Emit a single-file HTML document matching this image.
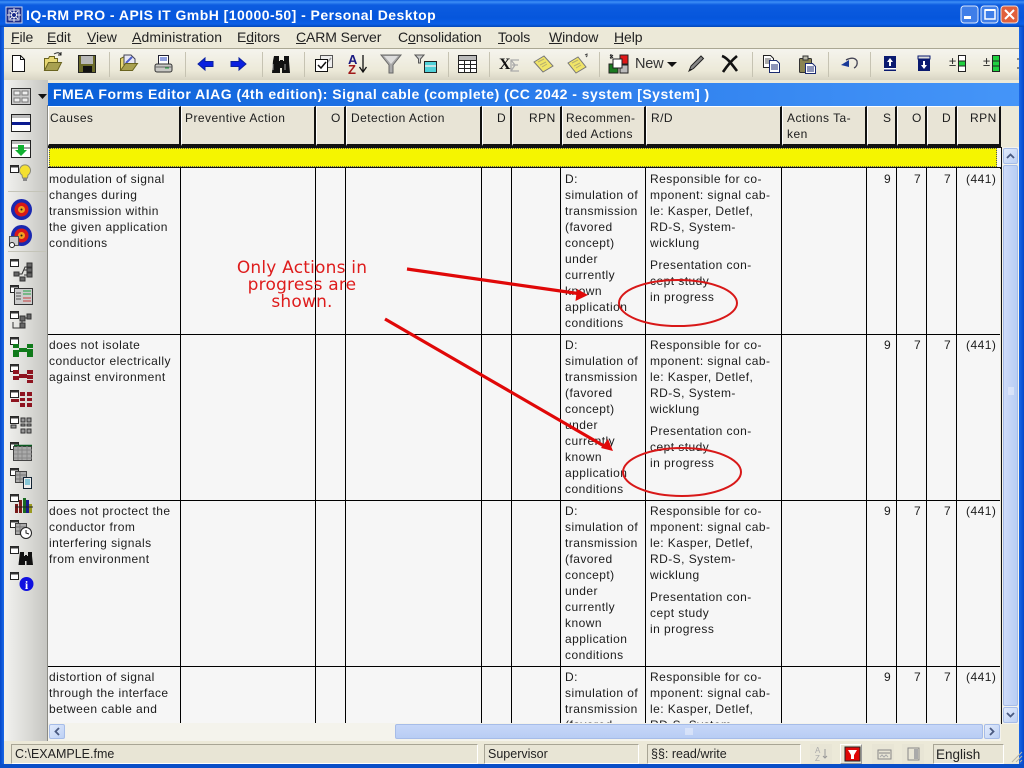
<!DOCTYPE html>
<html><head><meta charset="utf-8"><style>
html,body{margin:0;padding:0;width:1024px;height:768px;overflow:hidden;background:#ece9d8}
body{position:relative;font-family:"Liberation Sans",sans-serif;font-size:12px;color:#111}
.a{position:absolute;box-sizing:border-box}
.t{position:absolute;white-space:pre;line-height:16px;letter-spacing:.45px;color:#1c1c1c}
.m{position:absolute;top:28px;font-size:14px;line-height:18px;letter-spacing:-.1px;color:#222;white-space:pre}
.m u{text-decoration:underline}
.v{position:absolute;width:1px;background:#000}
.h{position:absolute;height:40px;top:106px;background:#e8e4d6;border-right:2px solid #111;border-bottom:2px solid #111;border-top:1px solid #fff;border-left:1px solid #fff;box-sizing:border-box}
.s{position:absolute;top:744px;height:20px;background:#e8e5d5;border:1px solid #a8a595;border-right-color:#fff;border-bottom-color:#fff;box-sizing:border-box;line-height:19px;font-size:12.5px;padding-left:3px;white-space:pre;color:#222}
.sb{position:absolute;top:744px;height:20px;width:22px;background:#e8e5d5;box-sizing:border-box}
#clip{position:absolute;left:48px;top:168px;width:952px;height:555px;overflow:hidden;background:#f6f6f6}
</style></head><body>
<div class="a" style="left:0;top:0;width:1024px;height:27px;background:linear-gradient(#0a5be0 0,#3d8ef5 2px,#0c5ce0 5px,#0656dc 18px,#0a5fe8 24px,#0347b8 27px)"></div>
<div class="a" style="left:0;top:27px;width:4px;height:741px;background:linear-gradient(90deg,#0347c8,#1a68e8)"></div>
<div class="a" style="left:1019px;top:27px;width:5px;height:741px;background:linear-gradient(90deg,#1a68e8,#0347c8)"></div>
<div class="a" style="left:0;top:764px;width:1024px;height:4px;background:#0a4fc8"></div>
<div class="a" style="left:4px;top:48px;width:1015px;height:1px;background:#aaa793"></div>
<div class="a" style="left:4px;top:49px;width:1015px;height:31px;background:linear-gradient(#f5f4ee,#ece9d8 70%,#d8d5c4)"></div>
<div class="a" style="left:4px;top:80px;width:44px;height:664px;background:linear-gradient(90deg,#f2f2f0,#d8d8d4 60%,#c4c4c0)"></div>
<div class="a" style="left:47px;top:105px;width:2px;height:639px;background:#8a8a84"></div>
<div class="a" style="left:26px;top:6px;font:bold 14px/18px 'Liberation Sans',sans-serif;letter-spacing:.46px;color:#fff;white-space:pre">IQ-RM PRO - APIS IT GmbH [10000-50] - Personal Desktop</div>
<div class="m" style="left:11px"><u>F</u>ile</div>
<div class="m" style="left:47px"><u>E</u>dit</div>
<div class="m" style="left:87px"><u>V</u>iew</div>
<div class="m" style="left:132px;letter-spacing:.1px"><u>A</u>dministration</div>
<div class="m" style="left:237px">E<u>d</u>itors</div>
<div class="m" style="left:296px"><u>C</u>ARM Server</div>
<div class="m" style="left:398px">C<u>o</u>nsolidation</div>
<div class="m" style="left:498px"><u>T</u>ools</div>
<div class="m" style="left:549px"><u>W</u>indow</div>
<div class="m" style="left:614px"><u>H</u>elp</div>
<div class="m" style="left:635px;top:55px;font-size:14.5px;letter-spacing:-.2px;color:#333">New</div>

<div class="a" style="left:48px;top:83px;width:971px;height:23px;background:linear-gradient(90deg,#0a5fd8,#2a7cec 50%,#4595f8)"></div>
<div class="a" style="left:53px;top:85px;font:bold 14px/18px 'Liberation Sans',sans-serif;letter-spacing:.48px;color:#fff;white-space:pre">FMEA Forms Editor AIAG (4th edition): Signal cable (complete) (CC 2042 - system [System] )</div>

<div class="h" style="left:48px;width:133px"></div>
<div class="h" style="left:181px;width:135px"></div>
<div class="h" style="left:316px;width:30px"></div>
<div class="h" style="left:346px;width:136px"></div>
<div class="h" style="left:482px;width:30px"></div>
<div class="h" style="left:512px;width:50px"></div>
<div class="h" style="left:562px;width:84px"></div>
<div class="h" style="left:646px;width:136px"></div>
<div class="h" style="left:782px;width:85px"></div>
<div class="h" style="left:867px;width:30px"></div>
<div class="h" style="left:897px;width:30px"></div>
<div class="h" style="left:927px;width:30px"></div>
<div class="h" style="left:957px;width:44px"></div>
<div class="a" style="left:1001px;top:106px;width:18px;height:40px;background:#ece9d8"></div>
<div class="t" style="left:50px;top:110px">Causes</div>
<div class="t" style="left:185px;top:110px">Preventive Action</div>
<div class="t" style="left:331px;top:110px">O</div>
<div class="t" style="left:351px;top:110px">Detection Action</div>
<div class="t" style="left:497px;top:110px">D</div>
<div class="t" style="left:529px;top:110px">RPN</div>
<div class="t" style="left:566px;top:110px">Recommen-
ded Actions</div>
<div class="t" style="left:651px;top:110px">R/D</div>
<div class="t" style="left:787px;top:110px">Actions Ta-
ken</div>
<div class="t" style="left:883px;top:110px">S</div>
<div class="t" style="left:912px;top:110px">O</div>
<div class="t" style="left:942px;top:110px">D</div>
<div class="t" style="left:970px;top:110px">RPN</div>

<div class="a" style="left:48px;top:146px;width:953px;height:23px;background:#f6f6f6"></div>
<div class="a" style="left:48px;top:146px;width:953px;height:2px;background:#111"></div>
<div class="a" style="left:49px;top:148px;width:948px;height:19px;background:#f5f500;border:1px dotted #555"></div>
<div class="a" style="left:48px;top:167px;width:953px;height:2px;background:#111"></div>

<div id="clip">
<div class="v" style="left:132px;top:0;height:556px"></div>
<div class="v" style="left:267px;top:0;height:556px"></div>
<div class="v" style="left:297px;top:0;height:556px"></div>
<div class="v" style="left:433px;top:0;height:556px"></div>
<div class="v" style="left:463px;top:0;height:556px"></div>
<div class="v" style="left:512px;top:0;height:556px"></div>
<div class="v" style="left:597px;top:0;height:556px"></div>
<div class="v" style="left:733px;top:0;height:556px"></div>
<div class="v" style="left:818px;top:0;height:556px"></div>
<div class="v" style="left:848px;top:0;height:556px"></div>
<div class="v" style="left:878px;top:0;height:556px"></div>
<div class="v" style="left:908px;top:0;height:556px"></div>
<div class="v" style="left:952px;top:0;height:556px"></div>
<div class="a" style="left:0;top:166px;width:952px;height:1px;background:#000"></div>
<div class="a" style="left:0;top:332px;width:952px;height:1px;background:#000"></div>
<div class="a" style="left:0;top:498px;width:952px;height:1px;background:#000"></div>

<div class="t" style="left:1px;top:3px">modulation of signal
changes during
transmission within
the given application
conditions</div>
<div class="t" style="left:517px;top:3px">D:
simulation of
transmission
(favored
concept)
under
currently
known
application
conditions</div>
<div class="t" style="left:602px;top:3px">Responsible for co-
mponent: signal cab-
le: Kasper, Detlef,
RD-S, System-
wicklung</div>
<div class="t" style="left:602px;top:89px">Presentation con-
cept study
in progress</div>
<div class="t" style="left:836px;top:3px">9</div><div class="t" style="left:866px;top:3px">7</div><div class="t" style="left:896px;top:3px">7</div><div class="t" style="left:918px;top:3px">(441)</div>

<div class="t" style="left:1px;top:169px">does not isolate
conductor electrically
against environment</div>
<div class="t" style="left:517px;top:169px">D:
simulation of
transmission
(favored
concept)
under
currently
known
application
conditions</div>
<div class="t" style="left:602px;top:169px">Responsible for co-
mponent: signal cab-
le: Kasper, Detlef,
RD-S, System-
wicklung</div>
<div class="t" style="left:602px;top:255px">Presentation con-
cept study
in progress</div>
<div class="t" style="left:836px;top:169px">9</div><div class="t" style="left:866px;top:169px">7</div><div class="t" style="left:896px;top:169px">7</div><div class="t" style="left:918px;top:169px">(441)</div>

<div class="t" style="left:1px;top:335px">does not proctect the
conductor from
interfering signals
from environment</div>
<div class="t" style="left:517px;top:335px">D:
simulation of
transmission
(favored
concept)
under
currently
known
application
conditions</div>
<div class="t" style="left:602px;top:335px">Responsible for co-
mponent: signal cab-
le: Kasper, Detlef,
RD-S, System-
wicklung</div>
<div class="t" style="left:602px;top:421px">Presentation con-
cept study
in progress</div>
<div class="t" style="left:836px;top:335px">9</div><div class="t" style="left:866px;top:335px">7</div><div class="t" style="left:896px;top:335px">7</div><div class="t" style="left:918px;top:335px">(441)</div>

<div class="t" style="left:1px;top:501px">distortion of signal
through the interface
between cable and</div>
<div class="t" style="left:517px;top:501px">D:
simulation of
transmission
(favored</div>
<div class="t" style="left:602px;top:501px">Responsible for co-
mponent: signal cab-
le: Kasper, Detlef,
RD-S, System-</div>
<div class="t" style="left:836px;top:501px">9</div><div class="t" style="left:866px;top:501px">7</div><div class="t" style="left:896px;top:501px">7</div><div class="t" style="left:918px;top:501px">(441)</div>
</div>

<!-- scrollbars -->
<div class="a" style="left:1001px;top:147px;width:18px;height:577px;background:#f4f3ec;border-left:1px solid #111"></div>
<div class="a" style="left:1003px;top:148px;width:15px;height:16px;background:linear-gradient(135deg,#e2ebfc,#bcd0f4);border:1px solid #a6bce8;border-radius:2px"></div>
<div class="a" style="left:1003px;top:165px;width:15px;height:541px;background:linear-gradient(90deg,#cfdcf8,#b8cdf4);border:1px solid #a6bce8;border-radius:2px"></div>
<div class="a" style="left:1003px;top:707px;width:15px;height:16px;background:linear-gradient(135deg,#e2ebfc,#bcd0f4);border:1px solid #a6bce8;border-radius:2px"></div>
<div class="a" style="left:48px;top:723px;width:953px;height:18px;background:#f4f3ec"></div>
<div class="a" style="left:49px;top:724px;width:16px;height:15px;background:linear-gradient(135deg,#e2ebfc,#bcd0f4);border:1px solid #a6bce8;border-radius:2px"></div>
<div class="a" style="left:395px;top:724px;width:588px;height:15px;background:linear-gradient(#c6d6f8,#b8cdf4);border:1px solid #a6bce8;border-radius:2px"></div>
<div class="a" style="left:984px;top:724px;width:16px;height:15px;background:linear-gradient(135deg,#e2ebfc,#bcd0f4);border:1px solid #a6bce8;border-radius:2px"></div>
<div class="a" style="left:1001px;top:724px;width:18px;height:17px;background:#ece9d8"></div>

<!-- status -->
<div class="a" style="left:4px;top:741px;width:1015px;height:23px;background:#ece9d8"></div>
<div class="s" style="left:11px;width:467px">C:\EXAMPLE.fme</div>
<div class="s" style="left:484px;width:155px">Supervisor</div>
<div class="s" style="left:647px;width:154px">§§: read/write</div>
<div class="sb" style="left:810px"></div>
<div class="sb" style="left:840px;border:1px solid #fff;border-right-color:#999;border-bottom-color:#999;background:#e8e5d5"></div>
<div class="sb" style="left:872px"></div>
<div class="sb" style="left:902px"></div>
<div class="s" style="left:933px;width:71px;font-size:13.5px;padding-left:2px">English</div>

<svg class="a" style="left:0;top:0" width="1024" height="768" viewBox="0 0 1024 768" xmlns="http://www.w3.org/2000/svg">
<!-- window buttons -->
<rect x="961" y="6" width="17" height="17" rx="3" fill="#3f7ee8" stroke="#dde8fb"/><rect x="964" y="16" width="7" height="3" fill="#fff"/>
<rect x="981" y="6" width="17" height="17" rx="3" fill="#3f7ee8" stroke="#dde8fb"/><rect x="985" y="10" width="10" height="9" fill="none" stroke="#fff" stroke-width="1.5"/><rect x="985" y="9" width="10" height="2" fill="#fff"/>
<rect x="1001" y="6" width="17" height="17" rx="3" fill="#e0603c" stroke="#f0dcd4"/><path d="M1005 10l9 9M1014 10l-9 9" stroke="#fff" stroke-width="2"/>
<!-- app icon -->
<rect x="6" y="7" width="16" height="16" fill="#1a2a88" stroke="#cfd8f0"/><path d="M9 10h10v10h-10z M14 8v14M7 15h14M10 11l8 8M18 11l-8 8" stroke="#e8e8f0" fill="none" stroke-width="1"/><circle cx="14" cy="15" r="2.5" fill="#1a2a88" stroke="#fff"/>

<!-- toolbar separators -->
<g stroke="#c6c3b2"><path d="M109.500 52v25M185.500 52v25M262.500 52v25M304.500 52v25M448.500 52v25M489.500 52v25M599.500 52v25M752.500 52v25M828.500 52v25M870.500 52v25"/></g>
<!-- new doc -->
<path d="M12.500 55.500h8l4 4v12h-12z" fill="#fff" stroke="#111"/><path d="M20.500 55.500v4h4" fill="none" stroke="#111"/>
<!-- open -->
<path d="M44.500 70.500v-12h4l1 -2h5v2h3v12z" fill="#e8d874" stroke="#6a6420"/><path d="M44.500 70.500l4-8h13l-4 8z" fill="#a8a050" stroke="#6a6420"/><path d="M54 54q5-3 7 1M61 52v3h-3" fill="none" stroke="#222"/>
<!-- save -->
<rect x="78.500" y="55.500" width="17" height="17" fill="#6a6a2a" stroke="#222"/><rect x="81" y="56" width="12" height="8" fill="#b8b8b8"/><rect x="83" y="66" width="9" height="6" fill="#111"/>
<!-- open doc -->
<path d="M120.500 70.500v-12l4-2h4" fill="#e8d874" stroke="#6a6420"/><path d="M124 66v-11h7l4 4v6z" fill="#e8e8f4" stroke="#445"/><path d="M126 63l6-6" stroke="#5060c8" stroke-width="2"/><path d="M120.500 70.500l5-7h12l-5 7z" fill="#a8a050" stroke="#6a6420"/>
<!-- print -->
<rect x="158.500" y="55.500" width="10" height="9" fill="#fff" stroke="#223"/><path d="M160 58h7M160 60h7" stroke="#2040c0"/><rect x="155" y="64" width="17" height="8" rx="2" fill="#c8c8c4" stroke="#333"/><path d="M155 67h17" stroke="#666"/><path d="M165 68h4" stroke="#20a040"/>
<!-- arrows -->
<path d="M198 64l7-6v3.500h8v5h-8v3.500z" fill="#0a20e0" stroke="#0a20a0"/>
<path d="M246 64l-7-6v3.500h-8v5h8v3.500z" fill="#0a20e0" stroke="#0a20a0"/>
<!-- binoculars -->
<path d="M274 56h5v5h1v-1h3v1h1v-5h5v5l1 12h-8v-5h-2v5h-8l1-12z" fill="#111"/><path d="M273 64v6M285 64v6" stroke="#9a9a9a"/>
<!-- check boxes -->
<rect x="320.500" y="55.500" width="12" height="12" fill="#eee" stroke="#555"/><path d="M323 61l3 3 5-6" stroke="#999" stroke-width="1.500" fill="none"/><rect x="315.500" y="59.500" width="12" height="12" fill="#fff" stroke="#111"/><path d="M318 65l3 3 5-6" stroke="#111" stroke-width="1.500" fill="none"/>
<!-- AZ -->
<text x="348" y="64" font-family="Liberation Sans" font-weight="bold" font-size="13" fill="#1a1a80">A</text><text x="348" y="74" font-family="Liberation Sans" font-weight="bold" font-size="13" fill="#a01818">Z</text><path d="M363 55v16M359.500 67l3.500 5 3.500-5" stroke="#111" fill="none" stroke-width="1.300"/>
<!-- funnel -->
<path d="M381 55h20l-8 10v8h-4v-8z" fill="#aaa" stroke="#666"/><path d="M384 56h14l-7 8z" fill="#ddd"/>
<!-- filter list -->
<path d="M415 55h9l-3.500 4v4h-2v-4z" fill="#ccc" stroke="#555"/><rect x="424.500" y="61.500" width="12" height="11" fill="#50d0d8" stroke="#222"/><path d="M425 66h11" stroke="#eee" stroke-width="1.500"/>
<!-- table -->
<rect x="458.500" y="55.500" width="18" height="17" fill="#fff" stroke="#222"/><rect x="459" y="56" width="17" height="4" fill="#bbb"/><path d="M459 60.500h17M459 64.500h17M459 68.500h17M464.500 60v12M470.500 60v12" stroke="#222"/>
<!-- X sigma -->
<text x="499" y="69" font-family="Liberation Serif" font-weight="bold" font-size="16" fill="#111">X</text><path d="M519 60h-8v11h8M511 60l4 5-4 6M512 65h6" fill="none" stroke="#aaa" stroke-width="1.300"/>
<!-- notes -->
<path d="M534 62l10-6 9 10-10 6z" fill="#f0e468" stroke="#777"/><path d="M538 62l6-3M540 65l6-3M542 67l5-3" stroke="#b8b070"/>
<path d="M568 63l10-6 8 10-10 6z" fill="#f0e468" stroke="#777"/><path d="M572 63l6-3M574 66l6-3M576 68l5-3" stroke="#b8b070"/><path d="M585 55l2-1v2l-1 1" stroke="#444" fill="none"/>
<!-- New icon -->
<rect x="609" y="64" width="9" height="9" fill="#1a7a20" stroke="#222"/><rect x="620" y="55" width="8" height="9" fill="#e01818" stroke="#222"/><rect x="620" y="65" width="8" height="8" fill="#bbb" stroke="#222"/><rect x="613" y="59" width="9" height="9" fill="#fff" stroke="#222"/><path d="M610 55l3 3M613 55l-3 3M611 54v5" stroke="#222"/>
<path d="M667 62h10l-5 5z" fill="#111"/>
<!-- pencil -->
<path d="M689 71l2-5 10-10 2.500 2.500-10 10z" fill="#888" stroke="#222"/><path d="M690 70l1.500-.5" stroke="#000"/>
<!-- X -->
<path d="M722 56C728 58 733 66 737 71" fill="none" stroke="#111" stroke-width="2.600"/><path d="M737 56C731 61 727 66 723 72" fill="none" stroke="#111" stroke-width="2.600"/>
<!-- copy -->
<path d="M763.500 55.500h7l3 3v9h-10z" fill="#fff" stroke="#222"/><path d="M765 59h6M765 61h6M765 63h6" stroke="#555"/><path d="M769.500 60.500h7l3 3v9h-10z" fill="#fff" stroke="#1a2a70"/><path d="M771 65h7M771 67h7M771 69h7" stroke="#1a2a70"/>
<!-- paste -->
<rect x="799.500" y="58.500" width="12" height="14" rx="1" fill="#8a8450" stroke="#333"/><rect x="803" y="56" width="5" height="4" fill="#b8b8a8" stroke="#333"/><path d="M805.500 63.500h7l3 3v7h-10z" fill="#fff" stroke="#1a2a70"/><path d="M807 67h7M807 69h7M807 71h7" stroke="#1a2a70"/>
<!-- undo -->
<path d="M846 60q8-4 11 1 1 5-3 7" fill="none" stroke="#445" stroke-width="1.300"/><path d="M841 65l8-5v7z" fill="#1a3a98"/>
<!-- move up/down -->
<rect x="884" y="56" width="12" height="15" fill="#0a1a70"/><path d="M890 58l3 4h-2v4h-2v-4h-2z" fill="#fff"/><rect x="884" y="68" width="12" height="1.500" fill="#fff"/>
<rect x="918" y="56" width="12" height="15" fill="#0a1a70"/><rect x="918" y="56" width="12" height="3" fill="#ddd" stroke="#0a1a70"/><path d="M924 69l3-4h-2v-4h-2v4h-2z" fill="#fff"/>
<!-- plus/minus -->
<text x="949" y="66" font-family="Liberation Sans" font-size="13" fill="#222">±</text>
<rect x="958.500" y="55.500" width="7" height="16" fill="#fff" stroke="#222"/><rect x="959" y="61" width="6" height="5" fill="#20d040"/><path d="M959 61h6M959 66h6" stroke="#222"/>
<text x="983" y="66" font-family="Liberation Sans" font-size="13" fill="#222">±</text>
<rect x="992.500" y="55.500" width="7" height="16" fill="#20d040" stroke="#222"/><path d="M993 61h6M993 66h6" stroke="#222"/>
<path d="M1017 59h2M1017 68h2" stroke="#222"/>

<!-- sidebar -->
<rect x="11.500" y="88.500" width="19" height="16" fill="#ccc" stroke="#333"/><rect x="14" y="91" width="6" height="4" fill="#eee" stroke="#777"/><rect x="22" y="91" width="6" height="4" fill="#eee" stroke="#777"/><rect x="14" y="98" width="6" height="4" fill="#eee" stroke="#777"/><rect x="22" y="98" width="6" height="4" fill="#eee" stroke="#777"/>
<path d="M38 94h9l-4.500 5z" fill="#111"/>
<rect x="11.500" y="114.500" width="19" height="17" fill="#fff" stroke="#222"/><rect x="12" y="115" width="18" height="3" fill="#bbb"/><rect x="12" y="122" width="18" height="3" fill="#0a1a90"/>
<rect x="11.500" y="140.500" width="19" height="17" fill="#fff" stroke="#222"/><rect x="12" y="141" width="18" height="3" fill="#bbb"/><path d="M12 148h18" stroke="#444"/><path d="M18 145h6v5h3l-6 6-6-6h3z" fill="#10b030"/>
<g fill="#fff" stroke="#222"><rect x="10.500" y="165.500" width="8" height="7"/></g>
<rect x="10.500" y="165.500" width="8" height="2" fill="#333"/>
<path d="M22 175a5.500 5.500 0 1 1 6 0l-.5 3h-5z" fill="#f4e030" stroke="#887"/><rect x="23" y="178" width="4" height="3" fill="#888"/>
<path d="M8 191.500h38" stroke="#c4c4b8"/>
<circle cx="21.500" cy="209.500" r="10.500" fill="#1a28b0"/><circle cx="21.500" cy="209.500" r="7" fill="#d81818"/><circle cx="21.500" cy="209.500" r="3.500" fill="#f0a020"/><circle cx="21.500" cy="209.500" r="1" fill="#222"/>
<circle cx="21.500" cy="235.500" r="10.500" fill="#1a28b0"/><circle cx="21.500" cy="235.500" r="7" fill="#d81818"/><circle cx="21.500" cy="235.500" r="3.500" fill="#f0a020"/><circle cx="21.500" cy="235.500" r="1" fill="#222"/><rect x="9.500" y="236.500" width="9" height="9" fill="#ccc" stroke="#555"/><circle cx="12" cy="245" r="2.500" fill="#fff" stroke="#222"/>
<path d="M8 251.500h38" stroke="#c4c4b8"/>
<g fill="#fff" stroke="#222"><rect x="10.500" y="259.500" width="8" height="7"/><rect x="10.500" y="285.500" width="8" height="7"/><rect x="10.500" y="311.500" width="8" height="7"/><rect x="10.500" y="337.500" width="8" height="7"/><rect x="10.500" y="364.500" width="8" height="7"/><rect x="10.500" y="390.500" width="8" height="7"/><rect x="10.500" y="416.500" width="8" height="7"/><rect x="10.500" y="442.500" width="8" height="7"/><rect x="10.500" y="468.500" width="8" height="7"/><rect x="10.500" y="494.500" width="8" height="7"/><rect x="10.500" y="520.500" width="8" height="7"/><rect x="10.500" y="546.500" width="8" height="7"/><rect x="10.500" y="572.500" width="8" height="7"/></g>
<g fill="#333"><rect x="10.500" y="259.500" width="8" height="2"/><rect x="10.500" y="285.500" width="8" height="2"/><rect x="10.500" y="311.500" width="8" height="2"/><rect x="10.500" y="337.500" width="8" height="2"/><rect x="10.500" y="364.500" width="8" height="2"/><rect x="10.500" y="390.500" width="8" height="2"/><rect x="10.500" y="416.500" width="8" height="2"/><rect x="10.500" y="442.500" width="8" height="2"/><rect x="10.500" y="468.500" width="8" height="2"/><rect x="10.500" y="494.500" width="8" height="2"/><rect x="10.500" y="520.500" width="8" height="2"/><rect x="10.500" y="546.500" width="8" height="2"/><rect x="10.500" y="572.500" width="8" height="2"/></g>
<!-- tree 1 -->
<g fill="#666" stroke="#333"><rect x="14" y="272" width="5" height="4"/><rect x="20" y="277" width="5" height="4"/><rect x="27" y="263" width="5" height="4"/><rect x="27" y="268" width="5" height="4"/><rect x="27" y="273" width="5" height="4"/></g><path d="M19 274h3l3-7h2M24 270h3M24 275h3" fill="none" stroke="#333"/>
<!-- grid 2 -->
<rect x="14.500" y="288.500" width="18" height="16" fill="#ccc" stroke="#333"/><path d="M23 291h8M23 294h8" stroke="#20a040"/><path d="M23 298h8M23 301h8" stroke="#c84040"/><path d="M16 293h5M16 296h5M16 299h5" stroke="#555"/>
<!-- tree 3 -->
<g fill="#666" stroke="#333"><rect x="20" y="316" width="5" height="5"/><rect x="27" y="314" width="4" height="5"/><rect x="20" y="323" width="5" height="5"/></g><path d="M22 321v2M13 322v6h7M25 318h2" fill="none" stroke="#333"/>
<!-- green -->
<g fill="#0f7a1a"><rect x="13" y="344" width="6" height="4"/><rect x="13" y="350" width="6" height="4"/><rect x="13" y="353" width="6" height="4"/><rect x="27" y="344" width="6" height="4"/><rect x="27" y="349" width="6" height="4"/><rect x="27" y="353" width="6" height="4"/><rect x="19" y="348" width="8" height="4"/></g>
<!-- red -->
<g fill="#8e1420"><rect x="13" y="370" width="6" height="4"/><rect x="13" y="376" width="6" height="4"/><rect x="27" y="370" width="6" height="4"/><rect x="27" y="375" width="6" height="4"/><rect x="27" y="380" width="6" height="3"/><rect x="19" y="374" width="8" height="4"/></g>
<g fill="#8e1420"><rect x="20" y="392" width="5" height="4"/><rect x="27" y="392" width="5" height="4"/><rect x="20" y="398" width="5" height="3"/><rect x="27" y="398" width="5" height="3"/><rect x="20" y="403" width="5" height="4"/><rect x="27" y="403" width="5" height="4"/><rect x="11" y="399" width="8" height="3"/></g>
<!-- gray tree -->
<g fill="#999" stroke="#333"><rect x="21" y="418" width="4" height="4"/><rect x="27" y="418" width="4" height="4"/><rect x="21" y="424" width="4" height="2"/><rect x="27" y="424" width="4" height="2"/><rect x="21" y="429" width="4" height="4"/><rect x="27" y="429" width="4" height="4"/><rect x="11" y="425" width="5" height="3"/></g>
<!-- table gray -->
<rect x="13.500" y="446.500" width="18" height="14" fill="#aaa" stroke="#444"/><path d="M14 445.500h18" stroke="#0a5a20" stroke-width="1.500"/><path d="M14 450h18M14 454h18M14 458h18M18 446v14M22 446v14M27 446v14" stroke="#888"/>
<rect x="15.500" y="471.500" width="11" height="11" fill="#aaa" stroke="#444"/><path d="M16 475h10M16 479h10M20 472v10" stroke="#777"/><rect x="23.500" y="477.500" width="8" height="11" fill="#eee" stroke="#123"/><path d="M25 480h5M25 482h5M25 484h5" stroke="#20a0c0"/>
<!-- chart -->
<rect x="15" y="504" width="3" height="9" fill="#7a1a1a"/><rect x="19" y="500" width="3" height="13" fill="#7a1a1a"/><rect x="23" y="498" width="3" height="15" fill="#1a6a20"/><rect x="26" y="500" width="3" height="13" fill="#1a1a8a"/><rect x="29" y="504" width="3" height="9" fill="#9a9a20"/><path d="M15 507h18" stroke="#222"/>
<!-- clock -->
<rect x="15.500" y="523.500" width="11" height="11" fill="#aaa" stroke="#444"/><path d="M16 527h10M16 531h10M20 524v10" stroke="#777"/><circle cx="26" cy="533" r="5.500" fill="#fff" stroke="#222"/><path d="M26 530v3l3 1" stroke="#222" fill="none"/>
<!-- binoc -->
<path d="M20 552h4v4h1v-1h2v1h1v-4h4v4l1 9h-6.500v-4h-1.500v4h-6.500l1-9z" fill="#111"/>
<!-- info -->
<circle cx="26.500" cy="584" r="7" fill="#1010e0"/><text x="26.500" y="589" text-anchor="middle" font-family="Liberation Serif" font-weight="bold" font-size="12" fill="#fff">i</text>

<!-- scroll glyphs -->
<path d="M1007 158l3.500-3.500 3.500 3.500" fill="none" stroke="#4a5a80" stroke-width="1.800"/>
<path d="M1007 713l3.500 3.500 3.500-3.500" fill="none" stroke="#4a5a80" stroke-width="1.800"/>
<path d="M59 728l-3.500 3.500 3.500 3.500" fill="none" stroke="#4a5a80" stroke-width="1.800"/>
<path d="M990 728l3.500 3.500-3.500 3.500" fill="none" stroke="#4a5a80" stroke-width="1.800"/>
<path d="M686 728v7M688 728v7M690 728v7M692 728v7" stroke="#eef2fc"/>
<path d="M1008 388h6M1008 390h6M1008 392h6M1008 394h6" stroke="#eef2fc"/>
<!-- status glyphs -->
<text x="815" y="753" font-family="Liberation Sans" font-size="8" fill="#aaa">A</text><text x="815" y="761" font-family="Liberation Sans" font-size="8" fill="#aaa">Z</text><path d="M825 749v9M823 756l2 2 2-2" stroke="#999" fill="none"/>
<rect x="845" y="747" width="15" height="14" fill="#e00808" stroke="#222"/><path d="M848 750h9l-3 5v4h-3v-4z" fill="#fff"/>
<rect x="878" y="750" width="13" height="9" fill="none" stroke="#888"/><path d="M879 753h11" stroke="#888"/><path d="M880 757l2-2 2 2 2-2 2 2" stroke="#aaa" fill="none"/>
<rect x="908" y="748" width="11" height="12" fill="none" stroke="#888"/><rect x="914" y="749" width="4" height="10" fill="#aaa"/>
<path d="M1022 752l-10 10M1022 756l-6 6M1022 760l-2 2" stroke="#b8b5a5"/>

<!-- annotation -->
<text x="302" y="273" text-anchor="middle" font-family="DejaVu Sans" font-size="17" letter-spacing=".2" fill="#de1c1c">Only Actions in</text>
<text x="302" y="290" text-anchor="middle" font-family="DejaVu Sans" font-size="17" letter-spacing=".2" fill="#de1c1c">progress are</text>
<text x="302" y="307" text-anchor="middle" font-family="DejaVu Sans" font-size="17" letter-spacing=".2" fill="#de1c1c">shown.</text>
<path d="M407 269L578 293.500" stroke="#e00808" stroke-width="3.200" fill="none"/><path d="M588 295l-11-6-1.500 12z" fill="#e00808"/>
<path d="M385 319L604 446" stroke="#e00808" stroke-width="3.200" fill="none"/><path d="M613 451l-5-12-7 9z" fill="#e00808"/>
<ellipse cx="678" cy="303" rx="59" ry="23" fill="none" stroke="#d81818" stroke-width="2"/>
<ellipse cx="682" cy="472" rx="59" ry="24" fill="none" stroke="#d81818" stroke-width="2"/>
</svg>
</body></html>
